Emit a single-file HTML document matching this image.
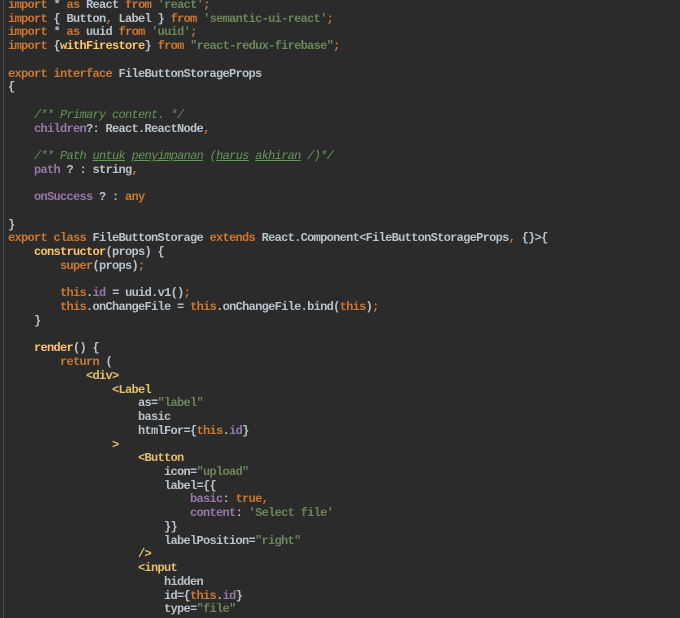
<!DOCTYPE html>
<html><head><style>
html,body{margin:0;padding:0;background:#2b2b2b;width:680px;height:618px;overflow:hidden}
.g{position:absolute;left:3px;top:0;width:1px;height:618px;background:#4a4a4a}
pre{position:absolute;left:8px;top:-1px;margin:0;font-family:"Liberation Mono",monospace;font-size:12px;letter-spacing:-0.7px;line-height:13.727px;color:#b9c3cc;font-weight:bold}
.k{color:#cc7832}.s{color:#6a8759}.p{color:#9876aa}.f{color:#ffc66d}.t{color:#e8bf6a}.c{color:#629755;font-style:italic;font-weight:normal}.u{text-decoration:underline}
</style></head><body><div class="g"></div><pre><span class="k">import</span> * <span class="k">as</span> React <span class="k">from</span> <span class="s">'react'</span><span class="k">;</span>
<span class="k">import</span> { Button<span class="k">,</span> Label } <span class="k">from</span> <span class="s">'semantic-ui-react'</span><span class="k">;</span>
<span class="k">import</span> * <span class="k">as</span> uuid <span class="k">from</span> <span class="s">'uuid'</span><span class="k">;</span>
<span class="k">import</span> {<span class="f">withFirestore</span>} <span class="k">from</span> <span class="s">"react-redux-firebase"</span><span class="k">;</span>

<span class="k">export interface</span> FileButtonStorageProps
{

    <span class="c">/** Primary content. */</span>
    <span class="p">children</span>?: React.ReactNode<span class="k">,</span>

    <span class="c">/** Path <span class="u">untuk</span> <span class="u">penyimpanan</span> (<span class="u">harus</span> <span class="u">akhiran</span> /)*/</span>
    <span class="p">path</span> ? : string<span class="k">,</span>

    <span class="p">onSuccess</span> ? : <span class="k">any</span>

}
<span class="k">export class</span> FileButtonStorage <span class="k">extends</span> React.Component&lt;FileButtonStorageProps<span class="k">,</span> {}&gt;{
    <span class="f">constructor</span>(props) {
        <span class="k">super</span>(props)<span class="k">;</span>

        <span class="k">this</span>.<span class="p">id</span> = uuid.v1()<span class="k">;</span>
        <span class="k">this</span>.onChangeFile = <span class="k">this</span>.onChangeFile.bind(<span class="k">this</span>)<span class="k">;</span>
    }

    <span class="f">render</span>() {
        <span class="k">return</span> (
            <span class="t">&lt;div&gt;</span>
                <span class="t">&lt;Label</span>
                    as=<span class="s">"label"</span>
                    basic
                    htmlFor={<span class="k">this</span>.<span class="p">id</span>}
                <span class="t">&gt;</span>
                    <span class="t">&lt;Button</span>
                        icon=<span class="s">"upload"</span>
                        label={{
                            <span class="p">basic</span>: <span class="k">true,</span>
                            <span class="p">content</span>: <span class="s">'Select file'</span>
                        }}
                        labelPosition=<span class="s">"right"</span>
                    <span class="t">/&gt;</span>
                    <span class="t">&lt;input</span>
                        hidden
                        id={<span class="k">this</span>.<span class="p">id</span>}
                        type=<span class="s">"file"</span>
</pre></body></html>
